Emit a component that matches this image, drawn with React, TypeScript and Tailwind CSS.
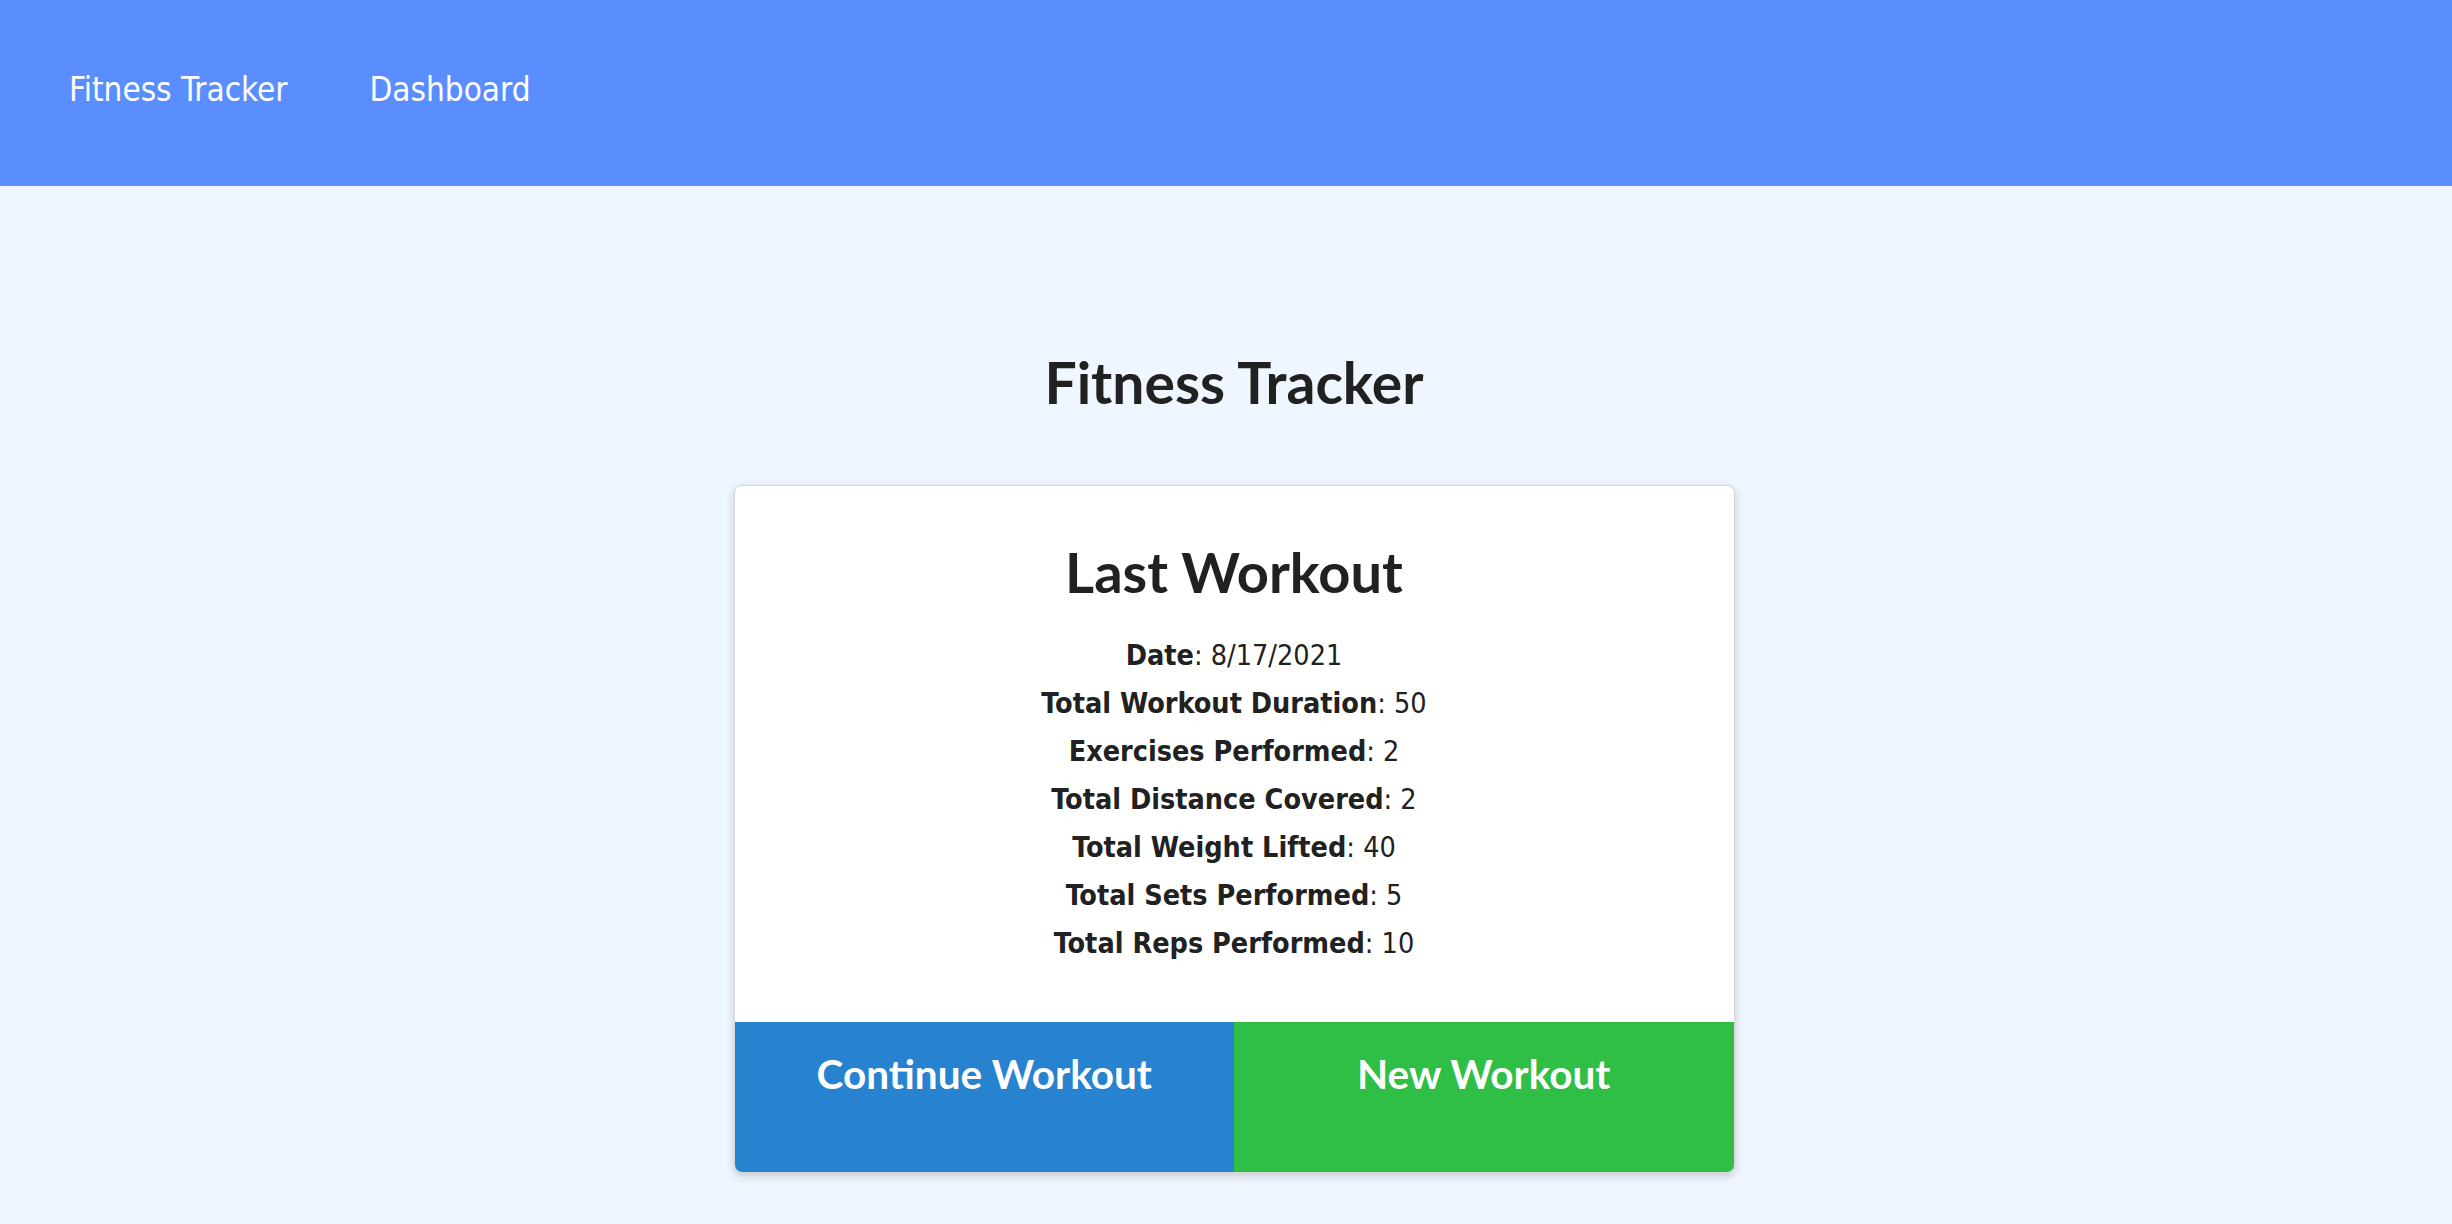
const stats = [
  ['Date', '8/17/2021'],
  ['Total Workout Duration', '50'],
  ['Exercises Performed', '2'],
  ['Total Distance Covered', '2'],
  ['Total Weight Lifted', '40'],
  ['Total Sets Performed', '5'],
  ['Total Reps Performed', '10'],
];

const tahoma = { fontFamily: '"DejaVu Sans Condensed", "DejaVu Sans", sans-serif', fontStretch: 'condensed' as const };

export default function App() {
  return (
    <div className="min-h-screen bg-[#eff6ff] text-[#212121]">
      {/* Navbar */}
      <nav className="h-[186px] bg-[#5a8efe] flex items-center pl-[69px] pb-[6px] gap-[82px] text-white text-[33px]" style={tahoma}>
        <a>Fitness Tracker</a>
        <a>Dashboard</a>
      </nav>

      <main className="flex flex-col items-center pt-[168px] pl-[16px] font-['Lato',sans-serif]">
        <h1 className="text-[57px] leading-none font-bold">Fitness Tracker</h1>

        <div className="mt-[74px] w-[1001px] bg-white rounded-[8px] border border-[#d6d6d6] shadow-[0_3px_10px_rgba(0,0,0,0.18)] overflow-hidden">
          <div className="pt-[58px] pb-[54px] flex flex-col items-center">
            <h2 className="text-[56px] leading-none font-bold">Last Workout</h2>
            <div className="mt-[32px] flex flex-col items-center text-[28.5px] leading-[48px]" style={tahoma}>
              {stats.map(([label, value]) => (
                <div key={label}>
                  <span className="font-bold">{label}</span>: {value}
                </div>
              ))}
            </div>
          </div>
          <div className="flex h-[150px] text-white text-[40.5px] font-bold leading-none">
            <button className="flex-1 bg-[#2783d0] pt-[32px] flex justify-center items-start">Continue Workout</button>
            <button className="flex-1 bg-[#2fbe46] pt-[32px] flex justify-center items-start">New Workout</button>
          </div>
        </div>
      </main>
    </div>
  );
}
